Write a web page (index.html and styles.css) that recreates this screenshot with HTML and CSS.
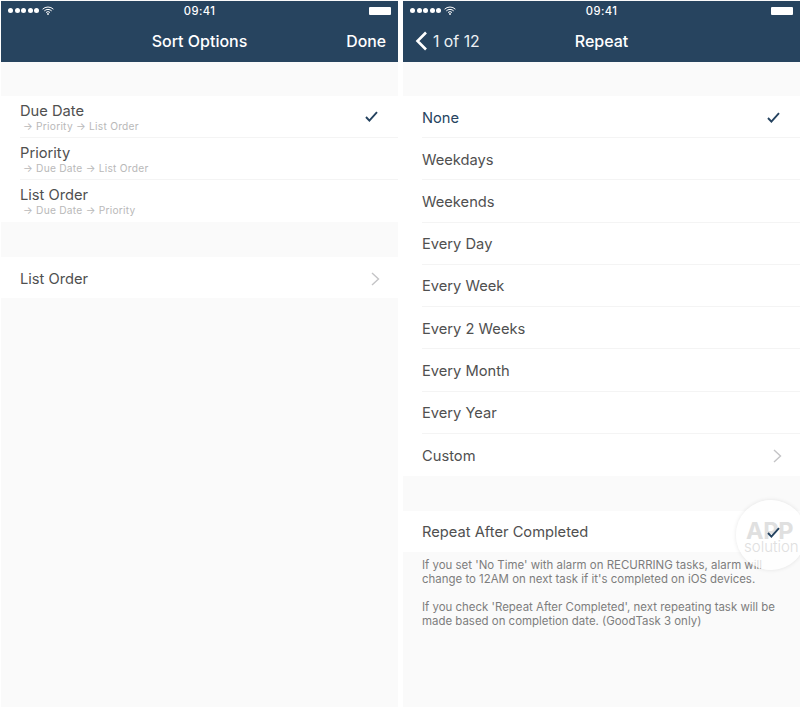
FILE: index.html
```html
<!DOCTYPE html>
<html lang="en">
<head>
    <meta charset="UTF-8">
    <title>Sort Options / Repeat</title>
    <link rel="stylesheet" href="styles.css">
</head>
<body>
    <div class="screens">
        <!-- Sort options -->
        <div class="phone">
            <div class="topbar">
                <div class="status">
                    <div class="status-left">
                        <span class="dots"><i></i><i></i><i></i><i></i><i></i></span>
                        <svg class="wifi" width="12" height="9" viewBox="0 0 12 9"><path d="M.6 3.2a7.8 7.8 0 0 1 10.8 0M2.3 4.9a5.3 5.3 0 0 1 7.4 0M4 6.5a2.9 2.9 0 0 1 4 0" fill="none" stroke="#fff" stroke-width="1"/><circle cx="6" cy="8" r=".9" fill="#fff"/></svg>
                    </div>
                    <span class="clock">09:41</span>
                    <span class="battery"></span>
                </div>
                <div class="navbar">
                    <span class="nav-side"></span>
                    <span class="nav-title">Sort Options</span>
                    <span class="nav-side nav-right">Done</span>
                </div>
            </div>
            <div class="gap"></div>
            <div class="rows">
                <div class="row sub">
                    <div><div class="label">Due Date</div><div class="hint">→ Priority → List Order</div></div>
                    <svg class="check" width="13" height="11" viewBox="0 0 13 11"><path d="M1 6l3.4 3.6L12 1.2" fill="none" stroke="#24425f" stroke-width="1.9"/></svg>
                </div>
                <div class="row sub">
                    <div><div class="label">Priority</div><div class="hint">→ Due Date → List Order</div></div>
                </div>
                <div class="row sub">
                    <div><div class="label">List Order</div><div class="hint">→ Due Date → Priority</div></div>
                </div>
            </div>
            <div class="gap gap-wide"></div>
            <div class="rows">
                <div class="row single">
                    <div class="label">List Order</div>
                    <svg class="chevron" width="9" height="14" viewBox="0 0 9 14"><path d="M1 1l6.5 6L1 13" fill="none" stroke="#c4c4c6" stroke-width="1.4"/></svg>
                </div>
            </div>
        </div>

        <!-- Repeat -->
        <div class="phone">
            <div class="topbar">
                <div class="status">
                    <div class="status-left">
                        <span class="dots"><i></i><i></i><i></i><i></i><i></i></span>
                        <svg class="wifi" width="12" height="9" viewBox="0 0 12 9"><path d="M.6 3.2a7.8 7.8 0 0 1 10.8 0M2.3 4.9a5.3 5.3 0 0 1 7.4 0M4 6.5a2.9 2.9 0 0 1 4 0" fill="none" stroke="#fff" stroke-width="1"/><circle cx="6" cy="8" r=".9" fill="#fff"/></svg>
                    </div>
                    <span class="clock">09:41</span>
                    <span class="battery"></span>
                </div>
                <div class="navbar">
                    <span class="nav-side nav-back">
                        <svg width="13" height="20" viewBox="0 0 13 20"><path d="M11 1.5L2.5 10l8.5 8.5" fill="none" stroke="#fff" stroke-width="2.6"/></svg>
                        1 of 12
                    </span>
                    <span class="nav-title">Repeat</span>
                    <span class="nav-side"></span>
                </div>
            </div>
            <div class="gap"></div>
            <div class="rows">
                <div class="row option">
                    <div class="label selected">None</div>
                    <svg class="check" width="13" height="11" viewBox="0 0 13 11"><path d="M1 6l3.4 3.6L12 1.2" fill="none" stroke="#24425f" stroke-width="1.9"/></svg>
                </div>
                <div class="row option"><div class="label">Weekdays</div></div>
                <div class="row option"><div class="label">Weekends</div></div>
                <div class="row option"><div class="label">Every Day</div></div>
                <div class="row option"><div class="label">Every Week</div></div>
                <div class="row option"><div class="label">Every 2 Weeks</div></div>
                <div class="row option"><div class="label">Every Month</div></div>
                <div class="row option"><div class="label">Every Year</div></div>
                <div class="row option">
                    <div class="label">Custom</div>
                    <svg class="chevron" width="9" height="14" viewBox="0 0 9 14"><path d="M1 1l6.5 6L1 13" fill="none" stroke="#c4c4c6" stroke-width="1.4"/></svg>
                </div>
            </div>
            <div class="gap gap-wide"></div>
            <div class="rows">
                <div class="row single">
                    <div class="label">Repeat After Completed</div>
                    <svg class="check" width="13" height="11" viewBox="0 0 13 11"><path d="M1 6l3.4 3.6L12 1.2" fill="none" stroke="#24425f" stroke-width="1.9"/></svg>
                </div>
            </div>
            <div class="notes">
                <p>If you set 'No Time' with alarm on RECURRING tasks, alarm will change to 12AM on next task if it's completed on iOS devices.</p>
                <p>If you check 'Repeat After Completed', next repeating task will be made based on completion date. (GoodTask 3 only)</p>
            </div>
            <div class="badge"><span class="badge-app">APP</span><span class="badge-sol">solution</span></div>
        </div>
    </div>
</body>
</html>
```

FILE: styles.css
```css
html, body {
    margin: 0;
    height: 100%;
    overflow: hidden;
}

body {
    background-color: white;
    font-family: Inter, "Liberation Sans", sans-serif;
}

.screens {
    display: flex;
    justify-content: space-between;
    height: 707px;
    padding-left: 1px;
}

.phone {
    position: relative;
    width: 397px;
    background-color: #fafafa;
    overflow: hidden;
}

.topbar {
    height: 61px;
    margin-top: 1px;
    background-color: #27445f;
    color: white;
}

.status {
    display: grid;
    grid-template-columns: 1fr auto 1fr;
    align-items: center;
    height: 19px;
    padding: 0 6px;
}

.status-left {
    display: flex;
    align-items: center;
    gap: 3px;
}

.dots {
    display: flex;
    gap: 1.5px;
    padding-left: 1px;
}

.dots i {
    width: 5px;
    height: 5px;
    border-radius: 50%;
    background-color: white;
}

.wifi {
    display: block;
}

.clock {
    font-size: 11.2px;
    font-weight: 500;
    letter-spacing: 0.4px;
}

.battery {
    justify-self: end;
    width: 22px;
    height: 8px;
    margin-right: 1px;
    background-color: white;
    border-radius: 1px;
}

.navbar {
    display: flex;
    align-items: center;
    justify-content: space-between;
    height: 42px;
    padding: 0 12px;
}

.nav-side {
    flex: 1;
    font-size: 15.8px;
    font-weight: 500;
}

.nav-right {
    text-align: right;
}

.nav-back {
    display: flex;
    align-items: center;
    gap: 5px;
    font-weight: 400;
    color: #eef1f4;
}

.nav-title {
    font-size: 16px;
    font-weight: 500;
}

.gap {
    height: 34px;
}

.gap-wide {
    height: 35px;
}

.rows {
    background-color: white;
}

.row {
    display: flex;
    align-items: center;
    justify-content: space-between;
    margin-left: 19px;
    padding-right: 20px;
    box-sizing: border-box;
    border-bottom: 1px solid #f4f4f4;
}

.row:last-child {
    border-bottom: none;
}

.sub {
    height: 42px;
}

.option {
    height: 42.22px;
    padding-top: 2px;
}

.single {
    height: 41px;
    padding-top: 2px;
}

.label {
    font-size: 14.7px;
    line-height: 18px;
    color: #505050;
}

.selected {
    color: #27445f;
}

.hint {
    font-size: 10.2px;
    line-height: 12px;
    color: #b9b9b9;
    margin-left: 3px;
    letter-spacing: 0.25px;
}

.check,
.chevron {
    flex-shrink: 0;
}

.chevron {
    margin-right: -2px;
}

/* the tick stays dark on top of the watermark */
.check {
    position: relative;
    z-index: 1;
}

.notes {
    padding: 6px 19px;
    font-size: 11.45px;
    line-height: 14px;
    color: #7d7d7d;
}

.notes p {
    margin: 0 0 14px;
}

.badge {
    position: absolute;
    left: 333px;
    top: 500px;
    width: 70px;
    height: 70px;
    border-radius: 50%;
    background-color: rgba(255, 255, 255, 0.75);
    box-shadow: 0 0 4px rgba(0, 0, 0, 0.1);
    color: #e0e0e0;
}

.badge-app {
    position: absolute;
    left: 10px;
    top: 22px;
    font-size: 23.5px;
    font-weight: 700;
    line-height: 17px;
    letter-spacing: -0.3px;
}

.badge-sol {
    position: absolute;
    left: 8px;
    top: 41px;
    font-size: 15px;
    font-weight: 300;
    line-height: 11px;
}
```
